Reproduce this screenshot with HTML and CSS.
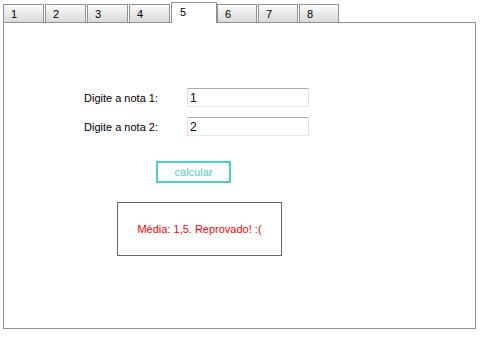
FILE: index.html
```html
<!DOCTYPE html>
<html lang="pt-BR">

<head>
    <meta charset="UTF-8" />
    <meta name="viewport" content="width=device-width, initial-scale=1.0" />
    <title>Média</title>
    <link rel="stylesheet" href="styles.css">
</head>

<body>

    <div class="tabs">
        <div class="tab">1</div>
        <div class="tab">2</div>
        <div class="tab">3</div>
        <div class="tab">4</div>
        <div class="tab active">5</div>
        <div class="tab after">6</div>
        <div class="tab after">7</div>
        <div class="tab after">8</div>
    </div>

    <div class="panel">
        <form class="notas" name="notas">
            <div class="row">
                <label for="nota1">Digite a nota 1:</label>
                <input type="text" id="nota1" value="1">
            </div>
            <div class="row">
                <label for="nota2">Digite a nota 2:</label>
                <input type="text" id="nota2" value="2">
            </div>
            <button type="button" class="calcular">calcular</button>
        </form>

        <div class="resultado">Média: 1,5. Reprovado! :(</div>
    </div>

</body>

</html>
```

FILE: styles.css
```css
* {
    box-sizing: border-box;
}

body {
    margin: 0;
    background-color: #ffffff;
    font-family: "Liberation Sans", Arial, sans-serif;
    font-size: 11px;
    color: #000000;
}

/* tabs */

.tabs {
    display: flex;
    align-items: flex-end;
    padding: 2px 0 0 3px;
}

.tab {
    width: 41px;
    height: 18px;
    margin-right: 1px;
    padding: 3px 0 0 7px;
    line-height: 13px;
    border: 1px solid #919191;
    border-bottom: none;
    background: linear-gradient(#fcfcfc, #e6e6e6 60%, #d9d9d9);
}

.tab.active {
    position: relative;
    z-index: 1;
    width: 46px;
    height: 21px;
    margin-right: 0;
    margin-bottom: -1px;
    padding-left: 8px;
    background: #ffffff;
}

.tab.after {
    width: 40px;
}

/* panel */

.panel {
    width: 473px;
    height: 307px;
    margin-left: 3px;
    padding: 65px 0 0 80px;
    border: 1px solid #919191;
}

.notas {
    display: flex;
    flex-direction: column;
    gap: 10px;
}

.row {
    display: flex;
    align-items: center;
}

.row label {
    width: 103px;
}

.row input {
    width: 122px;
    height: 19px;
    margin: 0;
    padding: 0 2px;
    font-family: "Liberation Sans", Arial, sans-serif;
    font-size: 12px;
    border: 1px solid;
    border-color: #abadb3 #dbdfe6 #e3e9ef #e2e3ea;
    outline: none;
}

.calcular {
    width: 75px;
    height: 22px;
    margin: 15px 0 0 72px;
    padding: 0;
    font-family: "Liberation Sans", Arial, sans-serif;
    font-size: 11px;
    color: #48d1cc;
    background-color: #ffffff;
    border: 2px solid #48d1cc;
}

.resultado {
    width: 165px;
    height: 54px;
    margin: 19px 0 0 33px;
    display: flex;
    align-items: center;
    justify-content: center;
    color: #ff0000;
    border: 1px solid #666666;
}
```
